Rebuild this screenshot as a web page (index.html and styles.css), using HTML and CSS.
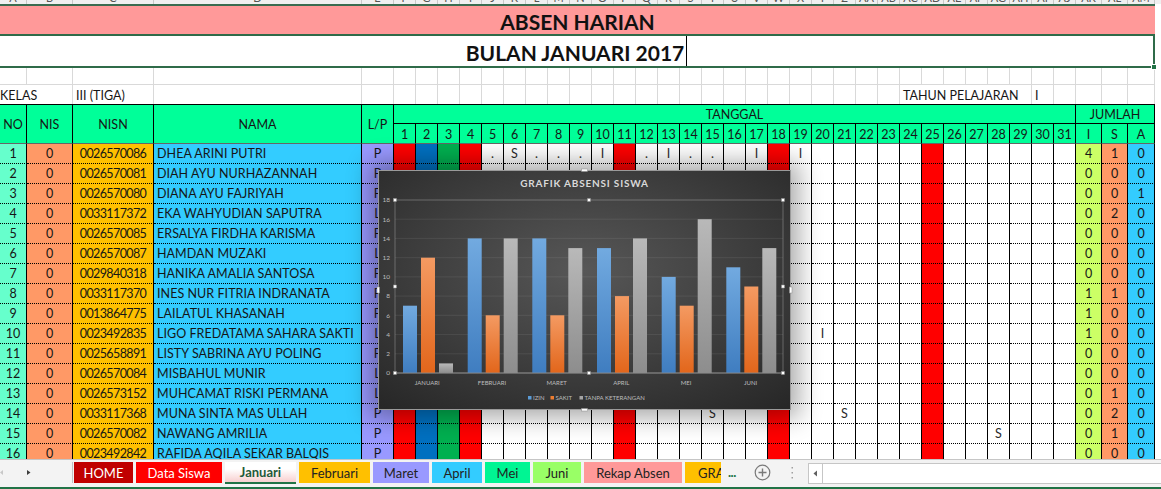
FILE: index.html
```html
<!DOCTYPE html>
<html>
<head>
<meta charset="utf-8">
<title>Absen Harian</title>
<link rel="stylesheet" href="styles.css">
</head>
<body>
<div class="sheet">
  <div class="colhead">
    <div class="colhead-in">
      <span>A</span><span>B</span><span>C</span><span>D</span><span>E</span><span>F</span><span>G</span><span>H</span><span>I</span><span>J</span><span>K</span><span>L</span><span>M</span><span>N</span><span>O</span><span>P</span><span>Q</span><span>R</span><span>S</span><span>T</span><span>U</span><span>V</span><span>W</span><span>X</span><span>Y</span><span>Z</span><span>AA</span><span>AB</span><span>AC</span><span>AD</span><span>AE</span><span>AF</span><span>AG</span><span>AH</span><span>AI</span><span>AJ</span><span>AK</span><span>AL</span><span>AM</span>
    </div>
  </div>

  <div class="title1">ABSEN HARIAN</div>
  <div class="title2">BULAN JANUARI 2017<span class="caret"></span><span class="fill-handle"></span></div>

  <div class="gl gl-blank">
    <span></span><span></span><span></span><span></span><span></span><span class="gd31"></span><span></span><span></span><span></span>
  </div>
  <div class="gl gl-kelas">
    <span class="kel">KELAS</span><span class="txt">III (TIGA)</span><span></span><span></span><span class="gd23"></span><span class="tp">TAHUN PELAJARAN</span><span class="txt">I</span><span></span><span></span><span></span><span></span>
  </div>

  <div class="thead">
    <b class="hm">NO</b><b class="hm">NIS</b><b class="hm">NISN</b><b class="hm">NAMA</b><b class="hm">L/P</b>
    <b class="tgl">TANGGAL</b><b class="jml">JUMLAH</b>
    <i>1</i><i>2</i><i>3</i><i>4</i><i>5</i><i>6</i><i>7</i><i>8</i><i>9</i><i>10</i><i>11</i><i>12</i><i>13</i><i>14</i><i>15</i><i>16</i><i>17</i><i>18</i><i>19</i><i>20</i><i>21</i><i>22</i><i>23</i><i>24</i><i>25</i><i>26</i><i>27</i><i>28</i><i>29</i><i>30</i><i>31</i><i>I</i><i>S</i><i>A</i>
  </div>

  <div class="tbody">
    <div class="row"><b>1</b><b>0</b><b>0026570086</b><b>DHEA ARINI PUTRI</b><b>P</b><i></i><i></i><i></i><i></i><i>.</i><i>S</i><i>.</i><i>.</i><i>.</i><i>I</i><i></i><i>.</i><i>I</i><i>.</i><i>.</i><i></i><i>I</i><i></i><i>I</i><i></i><i></i><i></i><i></i><i></i><i></i><i></i><i></i><i></i><i></i><i></i><i></i><b>4</b><b>1</b><b>0</b></div>
    <div class="row"><b>2</b><b>0</b><b>0026570081</b><b>DIAH AYU NURHAZANNAH</b><b>P</b><i></i><i></i><i></i><i></i><i></i><i></i><i></i><i></i><i></i><i></i><i></i><i></i><i></i><i></i><i></i><i></i><i></i><i></i><i></i><i></i><i></i><i></i><i></i><i></i><i></i><i></i><i></i><i></i><i></i><i></i><i></i><b>0</b><b>0</b><b>0</b></div>
    <div class="row"><b>3</b><b>0</b><b>0026570080</b><b>DIANA AYU FAJRIYAH</b><b>P</b><i></i><i></i><i></i><i></i><i></i><i></i><i></i><i></i><i></i><i></i><i></i><i></i><i></i><i></i><i></i><i></i><i></i><i></i><i></i><i></i><i></i><i></i><i></i><i></i><i></i><i></i><i></i><i></i><i></i><i></i><i></i><b>0</b><b>0</b><b>1</b></div>
    <div class="row"><b>4</b><b>0</b><b>0033117372</b><b>EKA WAHYUDIAN SAPUTRA</b><b>L</b><i></i><i></i><i></i><i></i><i></i><i></i><i></i><i></i><i></i><i></i><i></i><i></i><i></i><i></i><i></i><i></i><i></i><i></i><i></i><i></i><i></i><i></i><i></i><i></i><i></i><i></i><i></i><i></i><i></i><i></i><i></i><b>0</b><b>2</b><b>0</b></div>
    <div class="row"><b>5</b><b>0</b><b>0026570085</b><b>ERSALYA FIRDHA KARISMA</b><b>P</b><i></i><i></i><i></i><i></i><i></i><i></i><i></i><i></i><i></i><i></i><i></i><i></i><i></i><i></i><i></i><i></i><i></i><i></i><i></i><i></i><i></i><i></i><i></i><i></i><i></i><i></i><i></i><i></i><i></i><i></i><i></i><b>0</b><b>0</b><b>0</b></div>
    <div class="row"><b>6</b><b>0</b><b>0026570087</b><b>HAMDAN MUZAKI</b><b>L</b><i></i><i></i><i></i><i></i><i></i><i></i><i></i><i></i><i></i><i></i><i></i><i></i><i></i><i></i><i></i><i></i><i></i><i></i><i></i><i></i><i></i><i></i><i></i><i></i><i></i><i></i><i></i><i></i><i></i><i></i><i></i><b>0</b><b>0</b><b>0</b></div>
    <div class="row"><b>7</b><b>0</b><b>0029840318</b><b>HANIKA AMALIA SANTOSA</b><b>P</b><i></i><i></i><i></i><i></i><i></i><i></i><i></i><i></i><i></i><i></i><i></i><i></i><i></i><i></i><i></i><i></i><i></i><i></i><i></i><i></i><i></i><i></i><i></i><i></i><i></i><i></i><i></i><i></i><i></i><i></i><i></i><b>0</b><b>0</b><b>0</b></div>
    <div class="row"><b>8</b><b>0</b><b>0033117370</b><b>INES NUR FITRIA INDRANATA</b><b>P</b><i></i><i></i><i></i><i></i><i></i><i></i><i></i><i></i><i></i><i></i><i></i><i></i><i></i><i></i><i></i><i></i><i></i><i></i><i></i><i></i><i></i><i></i><i></i><i></i><i></i><i></i><i></i><i></i><i></i><i></i><i></i><b>1</b><b>1</b><b>0</b></div>
    <div class="row"><b>9</b><b>0</b><b>0013864775</b><b>LAILATUL KHASANAH</b><b>P</b><i></i><i></i><i></i><i></i><i></i><i></i><i></i><i></i><i></i><i></i><i></i><i></i><i></i><i></i><i></i><i></i><i></i><i></i><i></i><i></i><i></i><i></i><i></i><i></i><i></i><i></i><i></i><i></i><i></i><i></i><i></i><b>1</b><b>0</b><b>0</b></div>
    <div class="row"><b>10</b><b>0</b><b>0023492835</b><b>LIGO FREDATAMA SAHARA SAKTI</b><b>L</b><i></i><i></i><i></i><i></i><i></i><i></i><i></i><i></i><i></i><i></i><i></i><i></i><i></i><i></i><i></i><i></i><i></i><i></i><i></i><i>I</i><i></i><i></i><i></i><i></i><i></i><i></i><i></i><i></i><i></i><i></i><i></i><b>1</b><b>0</b><b>0</b></div>
    <div class="row"><b>11</b><b>0</b><b>0025658891</b><b>LISTY SABRINA AYU POLING</b><b>P</b><i></i><i></i><i></i><i></i><i></i><i></i><i></i><i></i><i></i><i></i><i></i><i></i><i></i><i></i><i></i><i></i><i></i><i></i><i></i><i></i><i></i><i></i><i></i><i></i><i></i><i></i><i></i><i></i><i></i><i></i><i></i><b>0</b><b>0</b><b>0</b></div>
    <div class="row"><b>12</b><b>0</b><b>0026570084</b><b>MISBAHUL MUNIR</b><b>L</b><i></i><i></i><i></i><i></i><i></i><i></i><i></i><i></i><i></i><i></i><i></i><i></i><i></i><i></i><i></i><i></i><i></i><i></i><i></i><i></i><i></i><i></i><i></i><i></i><i></i><i></i><i></i><i></i><i></i><i></i><i></i><b>0</b><b>0</b><b>0</b></div>
    <div class="row"><b>13</b><b>0</b><b>0026573152</b><b>MUHCAMAT RISKI PERMANA</b><b>L</b><i></i><i></i><i></i><i></i><i></i><i></i><i></i><i></i><i></i><i></i><i></i><i></i><i></i><i></i><i></i><i></i><i></i><i></i><i></i><i></i><i></i><i></i><i></i><i></i><i></i><i></i><i></i><i></i><i></i><i></i><i></i><b>0</b><b>1</b><b>0</b></div>
    <div class="row"><b>14</b><b>0</b><b>0033117368</b><b>MUNA SINTA MAS ULLAH</b><b>P</b><i></i><i></i><i></i><i></i><i></i><i></i><i></i><i></i><i></i><i></i><i></i><i></i><i></i><i></i><i>S</i><i></i><i></i><i></i><i></i><i></i><i>S</i><i></i><i></i><i></i><i></i><i></i><i></i><i></i><i></i><i></i><i></i><b>0</b><b>2</b><b>0</b></div>
    <div class="row"><b>15</b><b>0</b><b>0026570082</b><b>NAWANG AMRILIA</b><b>P</b><i></i><i></i><i></i><i></i><i></i><i></i><i></i><i></i><i></i><i></i><i></i><i></i><i></i><i></i><i></i><i></i><i></i><i></i><i></i><i></i><i></i><i></i><i></i><i></i><i></i><i></i><i></i><i>S</i><i></i><i></i><i></i><b>0</b><b>1</b><b>0</b></div>
    <div class="row"><b>16</b><b>0</b><b>0023492842</b><b>RAFIDA AQILA SEKAR BALQIS</b><b>P</b><i></i><i></i><i></i><i></i><i></i><i></i><i></i><i></i><i></i><i></i><i></i><i></i><i></i><i></i><i></i><i></i><i></i><i></i><i></i><i></i><i></i><i></i><i></i><i></i><i></i><i></i><i></i><i></i><i></i><i></i><i></i><b>0</b><b>0</b><b>0</b></div>
  </div>

  <div class="tabbar">
    <div class="nav">
      <svg width="72" height="21" viewBox="0 0 72 21"><path d="M3 8 L0 10.5 L3 13 Z" fill="#c8c8c8"/><path d="M27 8 L30.5 10.5 L27 13 Z" fill="#3c3c3c"/></svg>
    </div>
    <div class="tabs">
      <span class="tab t-home">HOME</span>
      <span class="tab t-data">Data Siswa</span>
      <span class="tab t-jan">Januari</span>
      <span class="tab t-feb">Februari</span>
      <span class="tab t-mar">Maret</span>
      <span class="tab t-apr">April</span>
      <span class="tab t-mei">Mei</span>
      <span class="tab t-jun">Juni</span>
      <span class="tab t-rek">Rekap Absen</span>
      <span class="tab t-gra">GRA</span>
    </div>
    <span class="more">...</span>
    <span class="add"><svg width="17" height="17" viewBox="0 0 17 17"><circle cx="8.5" cy="8.5" r="7.3" fill="none" stroke="#7a7a7a" stroke-width="1.2"/><path d="M8.5 4.5 V12.5 M4.5 8.5 H12.5" stroke="#7a7a7a" stroke-width="1.4"/></svg></span>
    <span class="vdots"><svg width="3" height="14" viewBox="0 0 3 14"><rect x="0.5" y="1" width="1.5" height="1.5" fill="#a0a0a0"/><rect x="0.5" y="6" width="1.5" height="1.5" fill="#a0a0a0"/><rect x="0.5" y="11" width="1.5" height="1.5" fill="#a0a0a0"/></svg></span>
    <div class="hscroll"><span class="sbtn"><svg width="5" height="7" viewBox="0 0 5 7"><path d="M4 0.5 L0.5 3.5 L4 6.5 Z" fill="#606060"/></svg></span></div>
  </div>
  <div class="statusline"></div>

  <div class="chart">
    <svg width="413" height="240" viewBox="0 0 413 240">
      <defs>
        <linearGradient id="gb" x1="0" y1="0" x2="0" y2="1"><stop offset="0" stop-color="#72aae0"/><stop offset="1" stop-color="#3f7dc0"/></linearGradient>
        <linearGradient id="go" x1="0" y1="0" x2="0" y2="1"><stop offset="0" stop-color="#f49a62"/><stop offset="1" stop-color="#e2661b"/></linearGradient>
        <linearGradient id="gg" x1="0" y1="0" x2="0" y2="1"><stop offset="0" stop-color="#b9b9b9"/><stop offset="1" stop-color="#8d8d8d"/></linearGradient>
      </defs>
      <rect class="cframe" x="0.5" y="0.5" width="412" height="239"/>
      <text class="ctitle" x="206.5" y="17" text-anchor="middle">GRAFIK ABSENSI SISWA</text>
      <g class="cgrid">
        <line x1="17" x2="405" y1="49.2" y2="49.2"/>
        <line x1="17" x2="405" y1="68.4" y2="68.4"/>
        <line x1="17" x2="405" y1="87.7" y2="87.7"/>
        <line x1="17" x2="405" y1="106.9" y2="106.9"/>
        <line x1="17" x2="405" y1="126.1" y2="126.1"/>
        <line x1="17" x2="405" y1="145.3" y2="145.3"/>
        <line x1="17" x2="405" y1="164.6" y2="164.6"/>
        <line x1="17" x2="405" y1="183.8" y2="183.8"/>
      </g>
      <rect class="pframe" x="17" y="30" width="388" height="173"/>
      <g class="ylab">
        <text x="12" y="205.3">0</text>
        <text x="12" y="186.1">2</text>
        <text x="12" y="166.9">4</text>
        <text x="12" y="147.6">6</text>
        <text x="12" y="128.4">8</text>
        <text x="12" y="109.2">10</text>
        <text x="12" y="90">12</text>
        <text x="12" y="70.7">14</text>
        <text x="12" y="51.5">16</text>
        <text x="12" y="32.3">18</text>
      </g>
      <g>
        <rect fill="url(#gb)" x="25" y="135.7" width="14" height="67.3"/>
        <rect fill="url(#go)" x="43" y="87.7" width="14" height="115.3"/>
        <rect fill="url(#gg)" x="61" y="193.4" width="14" height="9.6"/>
        <rect fill="url(#gb)" x="89.7" y="68.4" width="14" height="134.6"/>
        <rect fill="url(#go)" x="107.7" y="145.3" width="14" height="57.7"/>
        <rect fill="url(#gg)" x="125.7" y="68.4" width="14" height="134.6"/>
        <rect fill="url(#gb)" x="154.3" y="68.4" width="14" height="134.6"/>
        <rect fill="url(#go)" x="172.3" y="145.3" width="14" height="57.7"/>
        <rect fill="url(#gg)" x="190.3" y="78.1" width="14" height="124.9"/>
        <rect fill="url(#gb)" x="219" y="78.1" width="14" height="124.9"/>
        <rect fill="url(#go)" x="237" y="126.1" width="14" height="76.9"/>
        <rect fill="url(#gg)" x="255" y="68.4" width="14" height="134.6"/>
        <rect fill="url(#gb)" x="283.7" y="106.9" width="14" height="96.1"/>
        <rect fill="url(#go)" x="301.7" y="135.7" width="14" height="67.3"/>
        <rect fill="url(#gg)" x="319.7" y="49.2" width="14" height="153.8"/>
        <rect fill="url(#gb)" x="348.3" y="97.3" width="14" height="105.7"/>
        <rect fill="url(#go)" x="366.3" y="116.5" width="14" height="86.5"/>
        <rect fill="url(#gg)" x="384.3" y="78.1" width="14" height="124.9"/>
      </g>
      <line class="axis" x1="17" x2="405" y1="203" y2="203"/>
      <g class="xlab">
        <text x="49.3" y="214.5">JANUARI</text>
        <text x="114" y="214.5">FEBRUARI</text>
        <text x="178.7" y="214.5">MARET</text>
        <text x="243.3" y="214.5">APRIL</text>
        <text x="308" y="214.5">MEI</text>
        <text x="372.7" y="214.5">JUNI</text>
      </g>
      <g class="legend">
        <rect x="150" y="226" width="3.5" height="3.5" fill="#5b9bd5"/>
        <text x="155" y="230.2">IZIN</text>
        <rect x="172.5" y="226" width="3.5" height="3.5" fill="#ed7d31"/>
        <text x="177.5" y="230.2">SAKIT</text>
        <rect x="201.5" y="226" width="3.5" height="3.5" fill="#a5a5a5"/>
        <text x="206.5" y="230.2">TANPA KETERANGAN</text>
      </g>
      <g class="hdl">
        <rect x="15.5" y="28.5" width="3" height="3"/>
        <rect x="209.5" y="28.5" width="3" height="3"/>
        <rect x="403.5" y="28.5" width="3" height="3"/>
        <rect x="15.5" y="115" width="3" height="3"/>
        <rect x="403.5" y="115" width="3" height="3"/>
        <rect x="15.5" y="201.5" width="3" height="3"/>
        <rect x="209.5" y="201.5" width="3" height="3"/>
        <rect x="403.5" y="201.5" width="3" height="3"/>
        <rect x="203.5" y="-1" width="6" height="2.5"/>
        <rect x="203.5" y="238.5" width="6" height="2.5"/>
        <rect x="-1" y="117" width="2.5" height="6"/>
        <rect x="411.5" y="117" width="2.5" height="6"/>
      </g>
    </svg>
  </div>
</div>
</body>
</html>
```

FILE: styles.css
```css
* { box-sizing: border-box; margin: 0; padding: 0; }
html, body { width: 1161px; height: 489px; overflow: hidden; background: #fff; }
body { font-family: Lato, "Liberation Sans", sans-serif; color: #161616; }

.sheet {
  --cols: 27px 46px 81px 208px 32px repeat(31, 22px) 26px 26px 27px;
  position: relative;
  width: 1161px;
  height: 489px;
  overflow: hidden;
  display: flex;
  flex-direction: column;
}

/* column letters strip (cut off) */
.colhead { flex: none; height: 4px; overflow: hidden; background: #f0f0f0; }
.colhead-in {
  display: grid;
  grid-template-columns: var(--cols);
  width: 1155px;
  height: 13px;
  margin-top: -9px;
}
.colhead-in span {
  border-right: 1px solid #c9c9c9;
  font-size: 11px;
  line-height: 13px;
  text-align: center;
  color: #555;
}

/* titles */
.title1 {
  flex: none;
  width: 1155px;
  height: 30px;
  border-top: 2px solid #3a6c50;
  background: #ff9999;
  display: flex;
  align-items: center;
  justify-content: center;
  padding-top: 3px;
  font-weight: 700;
  font-size: 21px;
  color: #111;
}
.title2 {
  position: relative;
  flex: none;
  width: 1155px;
  height: 34px;
  border: 2px solid #2f6b49;
  border-left: 0;
  display: flex;
  align-items: center;
  justify-content: center;
  padding-top: 3px;
  font-weight: 700;
  font-size: 21px;
  color: #111;
}
.caret {
  display: inline-block;
  width: 1px;
  height: 30px;
  margin-left: 2px;
  margin-top: -3px;
  background: #000;
}
.fill-handle {
  position: absolute;
  right: -4px;
  bottom: -4px;
  width: 6px;
  height: 6px;
  background: #217346;
  border: 1px solid #fff;
}

/* light gridline rows */
.gl {
  flex: none;
  display: grid;
  grid-template-columns: var(--cols);
  width: 1155px;
}
.gl > span {
  border-right: 1px solid #d9d9d9;
  border-bottom: 1px solid #d9d9d9;
  font-size: 12.5px;
  white-space: nowrap;
  overflow: visible;
  background: #fff;
}
.gl-blank { height: 17px; }
.gl-kelas { height: 19px; }
.gl-kelas > span { border-bottom: 0; line-height: 19px; padding-top: 1px; }
.gl .gd31, .gl .gd23 {
  background: repeating-linear-gradient(to right, transparent 0 21px, #d9d9d9 21px 22px);
  border-right: 0;
}
.gd31 { grid-column: span 31; }
.gd23 { grid-column: span 23; }
.kel { grid-column: span 2; padding-left: 0; }
.txt { padding-left: 3px; }
.tp { grid-column: span 6; padding-left: 3px; }

/* table header */
.thead {
  flex: none;
  display: grid;
  grid-template-columns: var(--cols);
  grid-template-rows: 19px 20px;
  width: 1155px;
  border-top: 1px solid #000;
  background: #00ff99;
}
.thead > * {
  border-right: 1px solid #000;
  border-bottom: 1px solid #000;
  display: flex;
  align-items: center;
  justify-content: center;
  font-size: 12.5px;
  font-weight: 400;
  font-style: normal;
  color: #161616;
}
.thead .hm { grid-row: span 2; border-bottom-color: #666; }
.thead .tgl { grid-column: span 31; padding-top: 1px; }
.thead .jml { grid-column: span 3; padding-top: 1px; }
.thead i { border-bottom-color: #666; padding-top: 2px; }

/* table body */
.tbody { flex: none; height: 315px; overflow: hidden; width: 1161px; }
.row {
  display: grid;
  grid-template-columns: var(--cols);
  width: 1155px;
  height: 20px;
}
.row > * {
  border-right: 1px solid #000;
  border-bottom: 1px dotted #000;
  font-size: 12.5px;
  font-weight: 400;
  font-style: normal;
  line-height: 18px;
  padding-top: 1px;
  text-align: center;
  white-space: nowrap;
  overflow: hidden;
  color: #161616;
  background: #fff;
}
.row > :nth-child(1) { background: #66ffcc; }
.row > :nth-child(2) { background: #ff9966; }
.row > :nth-child(3) { background: #ffc000; letter-spacing: -0.6px; }
.row > :nth-child(4) { background: #33ccff; text-align: left; padding-left: 3px; letter-spacing: 0.05px; }
.row > :nth-child(5) { background: #9999ff; }
.row > :nth-child(6),
.row > :nth-child(9),
.row > :nth-child(16),
.row > :nth-child(23),
.row > :nth-child(30) { background: #ff0000; }
.row > :nth-child(7) { background: #0070c0; }
.row > :nth-child(8) { background: #00b050; }
.row > :nth-child(37) { background: #ccff66; }
.row > :nth-child(38) { background: #ff9966; }
.row > :nth-child(39) { background: #33ccff; }
.row i { color: #2a2a2a; }

/* sheet tabs */
.tabbar {
  flex: none;
  height: 28px;
  border-top: 1px solid #c6c6c6;
  background: #f3f3f3;
  display: flex;
  align-items: flex-start;
  padding-top: 2px;
  position: relative;
  z-index: 2;
}
.nav { width: 73px; height: 21px; border-right: 1px solid #c2c2c2; flex: none; }
.nav svg { display: block; }
.tabs { display: flex; flex: none; }
.tab {
  position: relative;
  flex: none;
  height: 21px;
  margin-left: 3px;
  display: flex;
  align-items: center;
  justify-content: center;
  font-size: 13px;
  color: #222;
  white-space: nowrap;
  overflow: hidden;
}
.tab:first-child { margin-left: 1px; }
.tab + .tab::before {
  content: "";
  position: absolute;
  left: -2px;
  top: 0;
  bottom: 0;
  width: 1px;
  background: #c8c8c8;
}
.t-home { width: 59px; background: #c00000; color: #fff; }
.t-data { width: 86px; background: #ff0000; color: #fff; }
.t-jan {
  width: 71px;
  background: linear-gradient(#ffffff 35%, #f8cfcf);
  border-bottom: 2px solid #217346;
  font-weight: 700;
  color: #1d5a3a;
  height: 22px;
}
.t-feb { width: 71px; background: #ffc000; }
.t-mar { width: 56px; background: #9999ff; }
.t-apr { width: 50px; background: #33ccff; }
.t-mei { width: 45px; background: #00f593; }
.t-jun { width: 48px; background: #99ff66; }
.t-rek { width: 98px; background: #ff9999; }
.t-gra { width: 36px; background: #ffc000; justify-content: flex-start; padding-left: 13px; }
.more {
  flex: none;
  margin-left: 7px;
  width: 13px;
  height: 21px;
  line-height: 21px;
  font-size: 13px;
  font-weight: 700;
  color: #217346;
  letter-spacing: -0.5px;
}
.add { flex: none; margin-left: 13px; height: 21px; display: flex; align-items: center; }
.add svg { display: block; }
.vdots { flex: none; margin-left: 20px; height: 21px; display: flex; align-items: center; }
.vdots svg { display: block; }
.hscroll {
  flex: 1;
  margin-left: 14px;
  height: 21px;
  margin-top: 1px;
  background: #fff;
  border: 1px solid #c6c6c6;
  border-right: 0;
  display: flex;
}
.sbtn {
  width: 14px;
  border-right: 1px solid #c6c6c6;
  display: flex;
  align-items: center;
  justify-content: center;
}
.sbtn svg { display: block; }
.statusline { flex: none; height: 2px; background: #217346; }

/* floating chart */
.chart {
  position: absolute;
  left: 378px;
  top: 170px;
  width: 413px;
  height: 240px;
  background: radial-gradient(ellipse 75% 75% at 50% 42%, #575757 0%, #3d3d3d 55%, #272727 100%);
  box-shadow: 0 0 22px 8px rgba(0, 0, 0, 0.33);
  z-index: 1;
}
.chart svg { display: block; overflow: visible; }
.cframe { fill: none; stroke: #9a9a9a; stroke-width: 1; }
.ctitle { font-family: Lato, "Liberation Sans", sans-serif; font-weight: 700; font-size: 10px; letter-spacing: 0.8px; fill: #d9d9d9; }
.cgrid line { stroke: rgba(255, 255, 255, 0.1); stroke-width: 0.8; }
.pframe { fill: none; stroke: rgba(200, 200, 200, 0.45); stroke-width: 0.8; }
.axis { stroke: #8a8a8a; stroke-width: 0.8; }
.ylab text { font-family: Lato, "Liberation Sans", sans-serif; font-size: 6.5px; fill: #bdbdbd; text-anchor: end; }
.xlab text { font-family: Lato, "Liberation Sans", sans-serif; font-size: 6px; fill: #bdbdbd; text-anchor: middle; }
.legend text { font-family: Lato, "Liberation Sans", sans-serif; font-size: 6px; fill: #bdbdbd; }
.hdl rect { fill: #fff; stroke: #8a8a8a; stroke-width: 0.5; }
```
